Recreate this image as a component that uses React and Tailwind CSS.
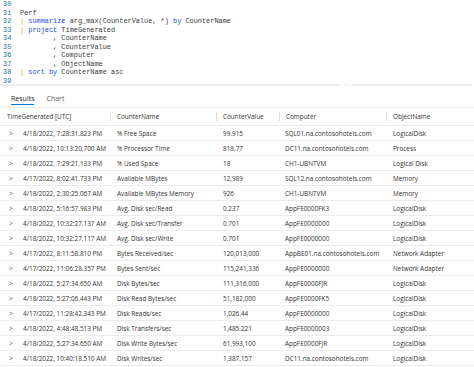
import React from "react";

const K = ({ children }) => <span className="text-[#1f4fd6]">{children}</span>;
const P = () => <span className="text-[#c9a227]">|</span>;

const codeLines = [
  { n: 30, c: null },
  { n: 31, c: <>Perf</> },
  { n: 32, c: <><P /> <K>summarize</K> arg_max(CounterValue, *) <K>by</K> CounterName</> },
  { n: 33, c: <><P /> <K>project</K> TimeGenerated</> },
  { n: 34, c: <>{"        , CounterName"}</> },
  { n: 35, c: <>{"        , CounterValue"}</> },
  { n: 36, c: <>{"        , Computer"}</> },
  { n: 37, c: <>{"        , ObjectName"}</> },
  { n: 38, c: <><P /> <K>sort by</K> CounterName asc</> },
  { n: 39, c: null },
];

const rows = [
  ["4/18/2022, 7:28:31.823 PM", "% Free Space", "99.915", "SQL01.na.contosohotels.com", "LogicalDisk"],
  ["4/18/2022, 10:13:20.700 AM", "% Processor Time", "818.77", "DC11.na.contosohotels.com", "Process"],
  ["4/18/2022, 7:29:21.133 PM", "% Used Space", "18", "CH1-UBNTVM", "Logical Disk"],
  ["4/17/2022, 8:02:41.733 PM", "Available MBytes", "12,989", "SQL12.na.contosohotels.com", "Memory"],
  ["4/18/2022, 2:30:25.067 AM", "Available MBytes Memory", "926", "CH1-UBNTVM", "Memory"],
  ["4/18/2022, 5:16:57.983 PM", "Avg. Disk sec/Read", "0.237", "AppFE0000FK3", "LogicalDisk"],
  ["4/18/2022, 10:32:27.137 AM", "Avg. Disk sec/Transfer", "0.701", "AppFE0000000", "LogicalDisk"],
  ["4/18/2022, 10:32:27.117 AM", "Avg. Disk sec/Write", "0.701", "AppFE0000000", "LogicalDisk"],
  ["4/17/2022, 8:11:58.810 PM", "Bytes Received/sec", "120,013,000", "AppBE01.na.contosohotels.com", "Network Adapter"],
  ["4/17/2022, 11:06:28.357 PM", "Bytes Sent/sec", "115,241,336", "AppFE0000000", "Network Adapter"],
  ["4/18/2022, 5:27:34.650 AM", "Disk Bytes/sec", "111,316,000", "AppFE0000FJR", "LogicalDisk"],
  ["4/18/2022, 5:27:06.443 PM", "Disk Read Bytes/sec", "51,182,000", "AppFE0000FK5", "LogicalDisk"],
  ["4/17/2022, 11:28:42.343 PM", "Disk Reads/sec", "1,026.44", "AppFE0000000", "LogicalDisk"],
  ["4/18/2022, 4:48:48.513 PM", "Disk Transfers/sec", "1,485.221", "AppFE0000003", "LogicalDisk"],
  ["4/18/2022, 5:27:34.650 AM", "Disk Write Bytes/sec", "61,993,100", "AppFE0000FJR", "LogicalDisk"],
  ["4/18/2022, 10:40:18.510 AM", "Disk Writes/sec", "1,387.157", "DC11.na.contosohotels.com", "LogicalDisk"],
];

const headers = ["CounterName", "CounterValue", "Computer", "ObjectName"];
const widths = ["w-[106px]", "w-[63px]", "w-[107px]", "flex-1"];

export default function App() {
  return (
    <div className="w-[474px] h-[367px] overflow-hidden bg-white text-[#323130]">
      {/* Query editor */}
      <div className="h-[83px] overflow-hidden font-['Liberation_Mono',monospace] text-[6.9px] leading-[8.5px] text-[#3b3b3b]">
        {codeLines.map((l) => (
          <div key={l.n} className="flex h-[8.5px] whitespace-pre">
            <span className="w-[20px] pl-[3px] text-[#237893]">{l.n}</span>
            <span>{l.c}</span>
          </div>
        ))}
      </div>

      {/* Splitter */}
      <div className="relative h-[2px] mt-[1px] mr-[2px] bg-[#ececec]">
        <span className="absolute left-[341px] -top-[3px] bg-white px-[2px] text-[5px] leading-[6px] tracking-[1px] text-[#8a8886]">···</span>
      </div>

      {/* Tabs */}
      <div className="flex gap-[12px] pl-[11px] pt-[8px] h-[21px] font-['Open_Sans',sans-serif] text-[7px] leading-[9px]">
        <div className="h-[11px] border-b-[1.5px] border-[#0078d4] text-[#201f1e]">Results</div>
        <div className="text-[#605e5c]">Chart</div>
      </div>

      {/* Grid */}
      <div className="font-['Open_Sans',sans-serif] text-[6.4px] leading-[15px]">
        <div className="flex h-[19px] items-center border-t border-b border-[#edebe9]">
          <div className="w-[110px] pl-[7px]">TimeGenerated [UTC]</div>
          {headers.map((h, i) => (
            <div key={h} className={`${widths[i]} flex items-center`}>
              <span className="h-[9px] w-px bg-[#e1dfdd]" />
              <span className="pl-[6px]">{h}</span>
            </div>
          ))}
        </div>
        {rows.map((r, i) => (
          <div key={i} className="flex h-[15px] items-center border-b border-[#edebe9] whitespace-nowrap">
            <div className="w-[110px] flex items-center">
              <span className="w-[23px] pl-[9px] text-[#605e5c] text-[7px]">&gt;</span>
              <span>{r[0]}</span>
            </div>
            <div className="w-[106px] pl-[7px]">{r[1]}</div>
            <div className="w-[63px] pl-[7px]">{r[2]}</div>
            <div className="w-[107px] pl-[6px]">{r[3]}</div>
            <div className="flex-1 pl-[7px]">{r[4]}</div>
          </div>
        ))}
      </div>
    </div>
  );
}
